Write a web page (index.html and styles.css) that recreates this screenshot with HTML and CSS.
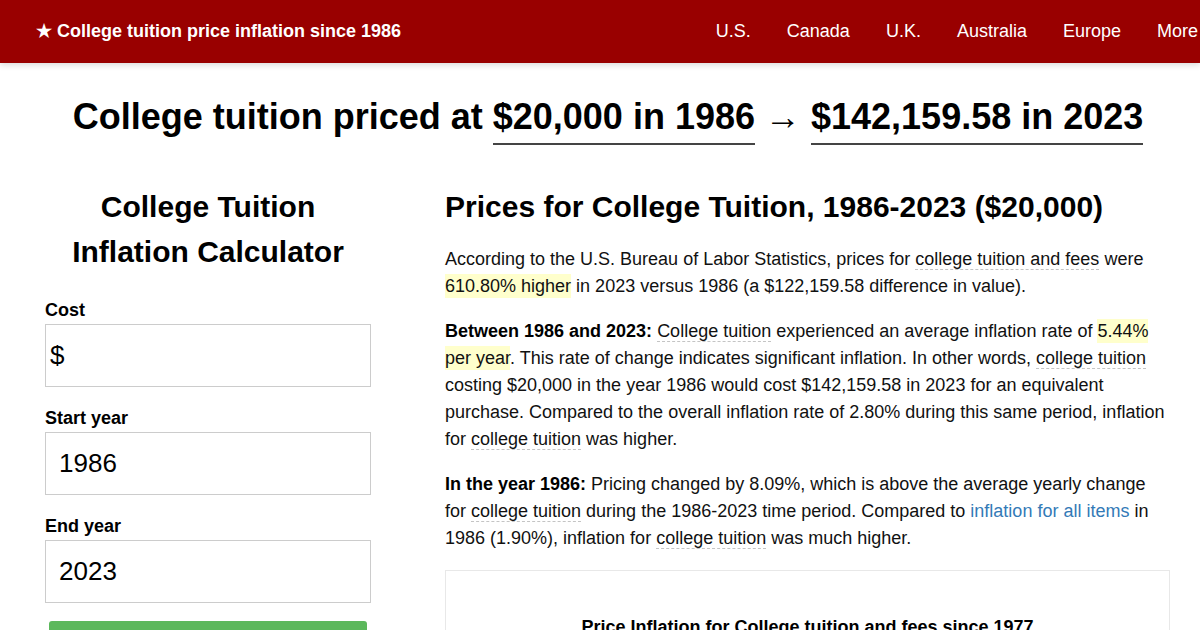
FILE: index.html
```html
<!DOCTYPE html>
<html lang="en">
<head>
<meta charset="utf-8">
<title>College tuition price inflation since 1986</title>
<link rel="stylesheet" href="styles.css">
</head>
<body>
<header class="topbar">
  <a class="brand" href="#">★ College tuition price inflation since 1986</a>
  <nav class="nav">
    <a href="#">U.S.</a>
    <a href="#">Canada</a>
    <a href="#">U.K.</a>
    <a href="#">Australia</a>
    <a href="#">Europe</a>
    <a href="#">More</a>
  </nav>
</header>

<h1 class="headline">College tuition priced at <span class="ul">$20,000 in 1986</span> <span class="arrow">→</span> <span class="ul">$142,159.58 in 2023</span></h1>

<main class="layout">
  <section class="calc">
    <h2 class="calc-title">College Tuition Inflation Calculator</h2>
    <label class="lbl">Cost</label>
    <div class="field money"><span class="cur">$</span><input class="inp" type="text" value=""></div>
    <label class="lbl">Start year</label>
    <div class="field"><input class="inp year" type="text" value="1986"></div>
    <label class="lbl">End year</label>
    <div class="field"><input class="inp year" type="text" value="2023"></div>
    <button class="btn" type="button">Calculate</button>
  </section>

  <section class="content">
    <h2 class="content-title">Prices for College Tuition, 1986-2023 ($20,000)</h2>
    <p>According to the U.S. Bureau of Labor Statistics, prices for <span class="term">college tuition and fees</span> were <span class="hl">610.80% higher</span> in 2023 versus 1986 (a $122,159.58 difference in value).</p>
    <p><strong>Between 1986 and 2023:</strong> <span class="term">College tuition</span> experienced an average inflation rate of <span class="hl">5.44% per year</span>. This rate of change indicates significant inflation. In other words, <span class="term">college tuition</span> costing $20,000 in the year 1986 would cost $142,159.58 in 2023 for an equivalent purchase. Compared to the overall inflation rate of 2.80% during this same period, inflation for <span class="term">college tuition</span> was higher.</p>
    <p><strong>In the year 1986:</strong> Pricing changed by 8.09%, which is above the average yearly change for <span class="term">college tuition</span> during the 1986-2023 time period. Compared to <a class="link" href="#">inflation for all items</a> in 1986 (1.90%), inflation for <span class="term">college tuition</span> was much higher.</p>
    <div class="chart">
      <div class="chart-title">Price Inflation for College tuition and fees since 1977</div>
    </div>
  </section>
</main>
</body>
</html>
```

FILE: styles.css
```css
html, body {
  margin: 0;
  padding: 0;
  background: #fff;
  overflow: hidden;
}
body {
  font-family: "Liberation Sans", Arial, sans-serif;
  color: #111;
  width: 1200px;
  height: 630px;
}

.topbar {
  height: 63px;
  background: #990000;
  display: flex;
  align-items: center;
  padding-left: 36px;
  box-shadow: 0 2px 6px rgba(0,0,0,0.15);
  white-space: nowrap;
  overflow: hidden;
}
.brand {
  color: #fff;
  font-weight: bold;
  font-size: 18px;
  text-decoration: none;
  position: relative;
  top: -1px;
}
.nav {
  margin-left: auto;
  margin-right: 2px;
  display: flex;
  gap: 36px;
}
.nav a {
  color: #fff;
  text-decoration: none;
  font-size: 18px;
}

.headline {
  margin: 32px 0 45px;
  font-size: 36px;
  line-height: 44px;
  text-align: center;
  font-weight: bold;
  color: #000;
  padding-left: 16px;
}
.ul {
  padding-bottom: 6px;
  border-bottom: 2px solid #444;
}
.arrow {
  font-weight: normal;
  font-size: 36px;
}

.layout {
  display: grid;
  grid-template-columns: 326px 725px;
  column-gap: 74px;
  padding-left: 45px;
}

.calc-title {
  margin: 0;
  padding: 0 12px;
  font-size: 30px;
  line-height: 45px;
  text-align: center;
  color: #000;
}
.lbl {
  display: block;
  font-weight: bold;
  font-size: 18px;
  line-height: 20px;
  color: #000;
  margin-top: 26px;
  margin-bottom: 4px;
}
.field ~ .lbl {
  margin-top: 21px;
}
.field {
  height: 63px;
  box-sizing: border-box;
  border: 1px solid #ccc;
  display: flex;
  align-items: center;
  background: #fff;
}
.cur {
  font-size: 26px;
  padding-left: 4px;
  color: #000;
}
.inp {
  border: 0;
  outline: none;
  flex: 1;
  min-width: 0;
  height: 100%;
  font-family: "Liberation Sans", Arial, sans-serif;
  font-size: 26px;
  color: #000;
  background: transparent;
  padding: 0 0 0 13px;
}
.btn {
  display: block;
  margin: 18px 4px 0;
  width: calc(100% - 8px);
  height: 50px;
  background: #5cb85c;
  border: 0;
  border-radius: 3px;
  color: #fff;
  font-size: 20px;
  font-family: "Liberation Sans", Arial, sans-serif;
}

.content-title {
  margin: 0 0 17px;
  font-size: 30px;
  line-height: 45px;
  color: #000;
}
.content p {
  margin: 0 0 18px;
  font-size: 18px;
  line-height: 27px;
  color: #111;
}
.content strong {
  color: #000;
}
.term {
  border-bottom: 1px dashed #c4c4c4;
}
.hl {
  background: #ffffcc;
  padding: 2px 0;
}
.link {
  color: #337ab7;
  text-decoration: none;
}
.chart {
  margin-top: 7px;
  border: 1px solid #e8e8e8;
  height: 200px;
  box-sizing: border-box;
  padding-top: 46px;
}
.chart-title {
  text-align: center;
  font-weight: bold;
  font-size: 18px;
  color: #000;
}
```
